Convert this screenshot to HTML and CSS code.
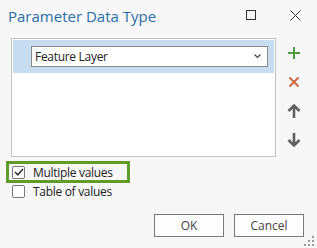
FILE: index.html
```html
<!DOCTYPE html>
<html lang="en">
<head>
  <meta charset="UTF-8">
  <title>Parameter Data Type</title>
  <link rel="stylesheet" href="styles.css">
</head>
<body>
  <div class="dialog">
    <div class="titlebar">
      <span class="title">Parameter Data Type</span>
      <span class="win-btn">
        <svg width="11" height="11" viewBox="0 0 11 11"><rect x="0.5" y="0.5" width="9" height="9" fill="none" stroke="#333" stroke-width="1"/></svg>
      </span>
      <span class="win-btn">
        <svg width="11" height="11" viewBox="0 0 11 11"><path d="M0.5 0.5 L10.5 10.5 M10.5 0.5 L0.5 10.5" stroke="#333" stroke-width="1"/></svg>
      </span>
    </div>

    <div class="main">
      <div class="listbox">
        <div class="row selected">
          <div class="combo">
            <span>Feature Layer</span>
            <svg width="7" height="5" viewBox="0 0 7 5"><path d="M0.5 0.5 L3.5 3.5 L6.5 0.5" fill="none" stroke="#444" stroke-width="1.2"/></svg>
          </div>
        </div>
      </div>
      <div class="tools">
        <span class="tool"><svg width="14" height="14" viewBox="0 0 14 14"><path d="M7 1 V13 M1 7 H13" stroke="#4c9a45" stroke-width="2"/></svg></span>
        <span class="tool"><svg width="12" height="12" viewBox="0 0 12 12"><path d="M1.5 1.5 L10.5 10.5 M10.5 1.5 L1.5 10.5" stroke="#d0684a" stroke-width="2"/></svg></span>
        <span class="tool"><svg width="14" height="16" viewBox="0 0 14 16"><path d="M7 2.5 V15 M1.5 8 L7 2.5 L12.5 8" fill="none" stroke="#5f5f5f" stroke-width="2.6"/></svg></span>
        <span class="tool"><svg width="14" height="16" viewBox="0 0 14 16"><path d="M7 1 V13.5 M1.5 8 L7 13.5 L12.5 8" fill="none" stroke="#5f5f5f" stroke-width="2.6"/></svg></span>
      </div>
    </div>

    <div class="options">
      <label class="check highlight">
        <span class="box">
          <svg width="10" height="8" viewBox="0 0 10 8"><path d="M1 4 L3.8 6.8 L9 1" fill="none" stroke="#333" stroke-width="1.6"/></svg>
        </span>
        Multiple values
      </label>
      <label class="check">
        <span class="box"></span>
        Table of values
      </label>
    </div>

    <div class="buttons">
      <button class="btn">OK</button>
      <button class="btn">Cancel</button>
    </div>

    <svg class="grip" width="12" height="12" viewBox="0 0 12 12">
      <g fill="#9a9a9a">
        <rect x="9" y="1" width="2" height="2"/>
        <rect x="5" y="5" width="2" height="2"/><rect x="9" y="5" width="2" height="2"/>
        <rect x="1" y="9" width="2" height="2"/><rect x="5" y="9" width="2" height="2"/><rect x="9" y="9" width="2" height="2"/>
      </g>
    </svg>
  </div>
</body>
</html>
```

FILE: styles.css
```css
body {
  margin: 0;
  background-color: #f7f7f7;
  font-family: "Open Sans", "Noto Sans", sans-serif;
  color: #222;
}

.dialog {
  position: relative;
  width: 317px;
  height: 248px;
  overflow: hidden;
}

.titlebar {
  display: flex;
  align-items: center;
  height: 31px;
  padding-left: 8px;
}

.title {
  flex: 1;
  font-size: 15px;
  color: #2b6ea8;
}

.win-btn {
  display: flex;
  justify-content: center;
  width: 44px;
}

.main {
  display: flex;
  align-items: flex-start;
  margin-top: 7px;
}

.listbox {
  width: 261px;
  height: 115px;
  margin-left: 11px;
  padding: 1px;
  border: 1px solid #c3c3c3;
  background-color: #fff;
}

.row.selected {
  height: 33px;
  padding-top: 6px;
  padding-left: 18px;
  box-sizing: border-box;
  background-color: #c7dcef;
}

.combo {
  display: flex;
  align-items: center;
  justify-content: space-between;
  width: 237px;
  height: 21px;
  padding: 0 6px 0 3px;
  box-sizing: border-box;
  border: 1px solid #8a8a8a;
  background-color: #fff;
  font-size: 12px;
  letter-spacing: -0.3px;
}

.tools {
  display: flex;
  flex-direction: column;
  align-items: center;
  gap: 9px;
  width: 36px;
  padding-top: 5px;
}

.tool {
  display: flex;
  align-items: center;
  justify-content: center;
  height: 20px;
}

.options {
  margin-top: 4px;
  margin-left: 6px;
}

.check {
  display: flex;
  align-items: center;
  gap: 8px;
  width: 115px;
  height: 16px;
  padding-left: 6px;
  font-size: 12px;
  letter-spacing: -0.3px;
}

.check.highlight {
  padding-left: 3px;
  border: 3px solid #5f9c2c;
}

.box {
  display: flex;
  align-items: center;
  justify-content: center;
  width: 11px;
  height: 11px;
  border: 1px solid #777;
  border-radius: 2px;
  background-color: #fff;
}

.buttons {
  display: flex;
  justify-content: flex-end;
  gap: 10px;
  margin-top: 15px;
  margin-right: 13px;
}

.btn {
  width: 70px;
  height: 23px;
  padding: 0;
  border: 1px solid #7a7a7a;
  background-color: #fdfdfd;
  font-family: "Open Sans", "Noto Sans", sans-serif;
  font-size: 12px;
  color: #444;
}

.grip {
  position: absolute;
  right: 2px;
  bottom: 1px;
}
```
